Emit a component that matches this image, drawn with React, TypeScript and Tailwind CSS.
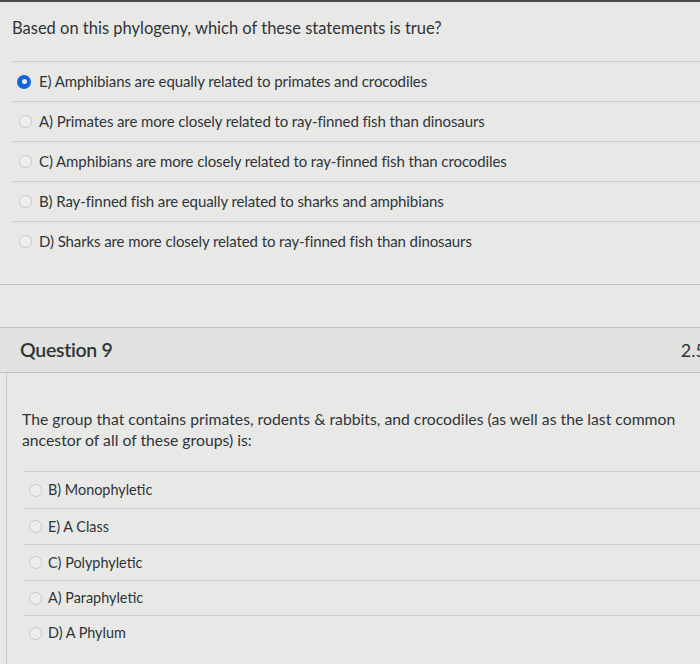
import React from "react";

function Radio({ selected }: { selected?: boolean }) {
  if (selected) {
    return (
      <span className="flex h-[14px] w-[14px] shrink-0 items-center justify-center rounded-full bg-[#1565d8]">
        <span className="h-[5px] w-[5px] rounded-full bg-[#e6eefb]" />
      </span>
    );
  }
  return (
    <span className="h-[13px] w-[13px] shrink-0 rounded-full border border-[#c9cac8] bg-[#eeefed]" />
  );
}

const q8 = [
  { t: "E) Amphibians are equally related to primates and crocodiles", s: true },
  { t: "A) Primates are more closely related to ray-finned fish than dinosaurs" },
  { t: "C) Amphibians are more closely related to ray-finned fish than crocodiles" },
  { t: "B) Ray-finned fish are equally related to sharks and amphibians" },
  { t: "D) Sharks are more closely related to ray-finned fish than dinosaurs" },
];

const q9 = ["B) Monophyletic", "E) A Class", "C) Polyphyletic", "A) Paraphyletic", "D) A Phylum"];
const q9h = ["h-[37px]", "h-[36px]", "h-[36px]", "h-[35px]", "h-[35px]"];

export default function App() {
  return (
    <div
      className="relative h-[664px] w-[700px] overflow-hidden bg-[#e8e9e6] text-[#2f3438]"
      style={{ fontFamily: "Lato, 'Open Sans', sans-serif" }}
    >
      <div className="h-[2px] bg-[#4a4b4b]" />
      {/* Question 8 body */}
      <div className="border-b border-[#c4c5c3]">
        <div className="pl-[12px] pt-[14px] text-[16.5px] leading-[24px]">
          Based on this phylogeny, which of these statements is true?
        </div>
        <div className="ml-[12px] mt-[21px] pb-[23px]">
          {q8.map((o, i) => (
            <div
              key={i}
              className={`flex h-[40px] items-center border-t border-[#cdcecc] ${
                i === 0 ? "pl-[5px]" : "pl-[7px]"
              }`}
            >
              <Radio selected={o.s} />
              <span className={`${o.s ? "ml-[8px]" : "ml-[7px]"} text-[15px] tracking-[-0.1px]`}>{o.t}</span>
            </div>
          ))}
        </div>
      </div>
      {/* gap */}
      <div className="h-[42px]" />
      {/* Question 9 header */}
      <div className="flex h-[46px] items-center justify-between border-y border-[#bfc0be] bg-[#e1e2e0] pl-[20px]">
        <span className="text-[19.5px] font-semibold tracking-[-0.3px]">Question 9</span>
        <span className="mr-[-6px] text-[18px]">2.5</span>
      </div>
      {/* Question 9 body */}
      <div className="ml-[6px] h-[300px] border-l border-[#c9cac8] pt-[35px]">
        <div className="pl-[15px] pr-[8px] text-[15.75px] leading-[21px]">
          The group that contains primates, rodents &amp; rabbits, and crocodiles (as well as the last common
          ancestor of all of these groups) is:
        </div>
        <div className="ml-[16px] mt-[21px]">
          {q9.map((t, i) => (
            <div
              key={i}
              className={`flex ${q9h[i]} items-center border-t border-[#cdcecc] pl-[6px]`}
            >
              <Radio />
              <span className="ml-[6px] text-[14.4px]">{t}</span>
            </div>
          ))}
        </div>
      </div>
    </div>
  );
}
